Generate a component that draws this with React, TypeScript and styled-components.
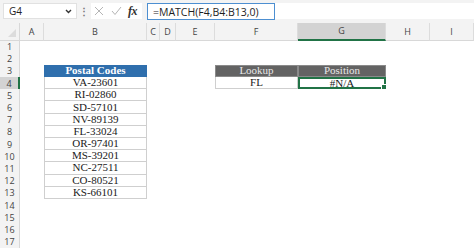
import styled, { createGlobalStyle, css } from "styled-components";

const GlobalStyle = createGlobalStyle`
  html, body {
    margin: 0;
    padding: 0;
    background: #ffffff;
    overflow: hidden;
  }
`;

const COLUMNS = [
  { key: "A", width: 24 },
  { key: "B", width: 103 },
  { key: "C", width: 13 },
  { key: "D", width: 16 },
  { key: "E", width: 39 },
  { key: "F", width: 83 },
  { key: "G", width: 88 },
  { key: "H", width: 44 },
  { key: "I", width: 44 },
];

const ROW_COUNT = 17;

const postalCodes = [
  "VA-23601",
  "RI-02860",
  "SD-57101",
  "NV-89139",
  "FL-33024",
  "OR-97401",
  "MS-39201",
  "NC-27511",
  "CO-80521",
  "KS-66101",
];

type CellKind = "plain" | "blueHead" | "grayHead" | "data" | "selected";

const cellAt = (row: number, col: string): { kind: CellKind; text?: string } => {
  if (col === "B" && row === 3) return { kind: "blueHead", text: "Postal Codes" };
  if (col === "B" && row >= 4 && row <= 13) return { kind: "data", text: postalCodes[row - 4] };
  if (col === "F" && row === 3) return { kind: "grayHead", text: "Lookup" };
  if (col === "G" && row === 3) return { kind: "grayHead", text: "Position" };
  if (col === "F" && row === 4) return { kind: "data", text: "FL" };
  if (col === "G" && row === 4) return { kind: "selected", text: "#N/A" };
  return { kind: "plain" };
};

const Window = styled.div`
  width: 474px;
  height: 249px;
  background: #ffffff;
  display: flex;
  flex-direction: column;
  font-family: "Open Sans", "Liberation Sans", sans-serif;
  overflow: hidden;
`;

const FormulaBar = styled.div`
  flex-shrink: 0;
  height: 23px;
  background: #f3f3f3;
  display: flex;
  align-items: flex-start;
  padding: 3px 0 0 3px;
  box-sizing: border-box;
`;

const NameBox = styled.div`
  width: 74px;
  height: 16px;
  background: #ffffff;
  border: 1px solid #e1e1e1;
  box-sizing: border-box;
  display: flex;
  align-items: center;
  justify-content: space-between;
  padding: 0 4px 0 5px;
  font-size: 10px;
  color: #222;
`;

const Dots = styled.div`
  width: 14px;
  height: 16px;
  display: flex;
  align-items: center;
  justify-content: center;
  color: #777;
  font-size: 10px;
  font-weight: bold;
`;

const IconBox = styled.div`
  width: 51px;
  height: 16px;
  background: #ffffff;
  display: flex;
  align-items: center;
  justify-content: space-between;
  padding: 0 5px 0 3px;
  box-sizing: border-box;
`;

const Fx = styled.span`
  font-family: "Liberation Serif", serif;
  font-style: italic;
  font-weight: bold;
  font-size: 12px;
  color: #333;
  letter-spacing: -0.5px;
`;

const FormulaInput = styled.div`
  width: 128px;
  height: 17px;
  margin-left: 5px;
  border: 1px solid #4d8fd1;
  background: #ffffff;
  box-sizing: border-box;
  display: flex;
  align-items: center;
  padding-left: 5px;
  font-size: 10.5px;
  color: #1e1e1e;
  white-space: nowrap;
`;

const FormulaRest = styled.div`
  flex: 1;
  height: 16px;
  background: #ffffff;
`;

const Sheet = styled.div`
  display: grid;
  grid-template-columns: 20px ${COLUMNS.map((c) => `${c.width}px`).join(" ")};
  grid-template-rows: 17.5px;
  grid-auto-rows: 12.2px;
`;

const Corner = styled.div`
  background: #f3f3f3;
  border-bottom: 1px solid #d8d8d8;
  border-right: 1px solid #d8d8d8;
  box-sizing: border-box;
  position: relative;
  &::after {
    content: "";
    position: absolute;
    right: 3px;
    bottom: 3px;
    border-style: solid;
    border-width: 0 0 8px 8px;
    border-color: transparent transparent #dcdcdc transparent;
  }
`;

const ColHead = styled.div<{ $active?: boolean }>`
  background: ${(p) => (p.$active ? "#d3d3d3" : "#f3f3f3")};
  border-right: 1px solid #dcdcdc;
  border-bottom: ${(p) => (p.$active ? "2px solid #217346" : "1px solid #d8d8d8")};
  box-sizing: border-box;
  display: flex;
  align-items: center;
  justify-content: center;
  font-size: 9px;
  color: #444;
  overflow: hidden;
`;

const RowHead = styled.div<{ $active?: boolean }>`
  background: ${(p) => (p.$active ? "#d3d3d3" : "#f3f3f3")};
  border-right: ${(p) => (p.$active ? "2px solid #217346" : "1px solid #d8d8d8")};
  box-sizing: border-box;
  display: flex;
  align-items: center;
  justify-content: center;
  font-size: 9px;
  color: #444;
`;

const kindStyles: Record<CellKind, ReturnType<typeof css>> = {
  plain: css``,
  blueHead: css`
    background: #2f6fad;
    color: #ffffff;
    font-weight: bold;
    border: 1px solid #2f6fad;
  `,
  grayHead: css`
    background: #636363;
    color: #e8e8e8;
    border: 1px solid #8a8a8a;
  `,
  data: css`
    color: #1a1a1a;
    border: 1px solid #cfcfcf;
    border-top: none;
  `,
  selected: css`
    color: #1a1a1a;
    border: 2px solid #217346;
    position: relative;
    &::after {
      content: "";
      position: absolute;
      right: -3px;
      bottom: -3px;
      width: 4px;
      height: 4px;
      background: #217346;
      border: 1px solid #ffffff;
    }
  `,
};

const Cell = styled.div<{ $kind: CellKind }>`
  box-sizing: border-box;
  display: flex;
  align-items: center;
  justify-content: center;
  font-family: "Liberation Serif", "Times New Roman", serif;
  font-size: 11px;
  line-height: 1;
  white-space: nowrap;
  ${(p) => kindStyles[p.$kind]}
`;

const Chevron = () => (
  <svg width="7" height="5" viewBox="0 0 7 5">
    <path d="M1 1 L3.5 3.5 L6 1" fill="none" stroke="#333" strokeWidth="1.4" />
  </svg>
);

const Cross = () => (
  <svg width="10" height="10" viewBox="0 0 10 10">
    <path d="M1 1 L9 9 M9 1 L1 9" stroke="#b5b5b5" strokeWidth="1" />
  </svg>
);

const Check = () => (
  <svg width="11" height="10" viewBox="0 0 11 10">
    <path d="M1 5 L4 8.5 L10 1" fill="none" stroke="#b5b5b5" strokeWidth="1" />
  </svg>
);

const App = () => {
  const rows = Array.from({ length: ROW_COUNT }, (_, i) => i + 1);
  return (
    <Window>
      <GlobalStyle />
      <FormulaBar>
        <NameBox>
          <span>G4</span>
          <Chevron />
        </NameBox>
        <Dots>⋮</Dots>
        <IconBox>
          <Cross />
          <Check />
          <Fx>fx</Fx>
        </IconBox>
        <FormulaInput>=MATCH(F4,B4:B13,0)</FormulaInput>
        <FormulaRest />
      </FormulaBar>
      <Sheet>
        <Corner />
        {COLUMNS.map((c) => (
          <ColHead key={c.key} $active={c.key === "G"}>
            {c.key}
          </ColHead>
        ))}
        {rows.map((r) => [
          <RowHead key={`h${r}`} $active={r === 4}>
            {r}
          </RowHead>,
          ...COLUMNS.map((c) => {
            const cell = cellAt(r, c.key);
            return (
              <Cell key={`${c.key}${r}`} $kind={cell.kind}>
                {cell.text}
              </Cell>
            );
          }),
        ])}
      </Sheet>
    </Window>
  );
};

export default App;
